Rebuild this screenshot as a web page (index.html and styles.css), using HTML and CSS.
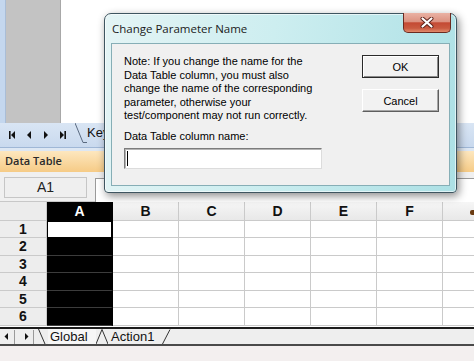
FILE: index.html
```html
<!DOCTYPE html>
<html lang="en">
<head>
    <meta charset="UTF-8">
    <title>Data Table - Change Parameter Name</title>
    <link rel="stylesheet" href="styles.css">
</head>
<body>
    <div class="app">
        <div class="top-pane">
            <div class="frame-edge"></div>
            <div class="tree-pane"></div>
            <div class="doc-pane"></div>
        </div>

        <div class="view-tabs">
            <svg class="view-nav" width="70" height="12" viewBox="0 0 70 12">
                <rect x="9" y="2" width="1.6" height="8" fill="#111"/>
                <path d="M15 2 L11 6 L15 10 Z" fill="#111"/>
                <path d="M31 2 L27 6 L31 10 Z" fill="#111"/>
                <path d="M44 2 L48 6 L44 10 Z" fill="#111"/>
                <path d="M60 2 L64 6 L60 10 Z" fill="#111"/>
                <rect x="64.4" y="2" width="1.6" height="8" fill="#111"/>
            </svg>
            <div class="view-tab">
                <svg class="view-tab-edge" width="12" height="21" viewBox="0 0 12 21">
                    <path d="M0 0 L8 19.5 H12" fill="none" stroke="#5a6a80" stroke-width="1"/>
                </svg>
                <span>Key</span>
            </div>
        </div>

        <div class="dt-title">Data Table</div>

        <div class="dt-toolbar">
            <div class="name-box">A1</div>
            <div class="formula-box"></div>
        </div>

        <div class="grid">
            <div class="corner"></div>
            <div class="col-head sel">A</div>
            <div class="col-head">B</div>
            <div class="col-head">C</div>
            <div class="col-head">D</div>
            <div class="col-head">E</div>
            <div class="col-head">F</div>
            <div class="col-head col-last"><span class="col-dot"></span></div>

            <div class="row-head">1</div>
            <div class="cell active"></div>
            <div class="cell"></div><div class="cell"></div><div class="cell"></div>
            <div class="cell"></div><div class="cell"></div><div class="cell"></div>

            <div class="row-head">2</div>
            <div class="cell sel"></div>
            <div class="cell"></div><div class="cell"></div><div class="cell"></div>
            <div class="cell"></div><div class="cell"></div><div class="cell"></div>

            <div class="row-head">3</div>
            <div class="cell sel"></div>
            <div class="cell"></div><div class="cell"></div><div class="cell"></div>
            <div class="cell"></div><div class="cell"></div><div class="cell"></div>

            <div class="row-head">4</div>
            <div class="cell sel"></div>
            <div class="cell"></div><div class="cell"></div><div class="cell"></div>
            <div class="cell"></div><div class="cell"></div><div class="cell"></div>

            <div class="row-head">5</div>
            <div class="cell sel"></div>
            <div class="cell"></div><div class="cell"></div><div class="cell"></div>
            <div class="cell"></div><div class="cell"></div><div class="cell"></div>

            <div class="row-head">6</div>
            <div class="cell sel"></div>
            <div class="cell"></div><div class="cell"></div><div class="cell"></div>
            <div class="cell"></div><div class="cell"></div><div class="cell"></div>
        </div>

        <div class="sheet-tabs">
            <svg class="sheet-nav" width="38" height="15" viewBox="0 0 38 15">
                <path d="M8 4 L4.5 7.5 L8 11 Z" fill="#111"/>
                <rect x="14" y="1" width="1" height="14" fill="#9a9a9a"/>
                <path d="M25 4 L28.5 7.5 L25 11 Z" fill="#111"/>
                <rect x="33" y="1" width="1" height="14" fill="#9a9a9a"/>
            </svg>
            <svg class="tab-edge" width="10" height="15" viewBox="0 0 10 15">
                <path d="M0.5 0 L7 15" fill="none" stroke="#333" stroke-width="1"/>
            </svg>
            <span class="sheet-tab active">Global</span>
            <svg class="tab-edge" width="12" height="15" viewBox="0 0 12 15">
                <path d="M0 15 L6 0.5 L12 15" fill="none" stroke="#333" stroke-width="1"/>
            </svg>
            <span class="sheet-tab">Action1</span>
            <svg class="tab-edge" width="9" height="15" viewBox="0 0 9 15">
                <path d="M0.5 15 L8 0.5" fill="none" stroke="#333" stroke-width="1"/>
            </svg>
        </div>

        <div class="status-bar"></div>
    </div>

    <div class="dialog">
        <div class="dlg-titlebar">
            <span class="dlg-title">Change Parameter Name</span>
            <div class="dlg-close">
                <svg width="14" height="11" viewBox="0 0 14 11">
                    <path d="M2.5 1.5 L11.5 9.5 M11.5 1.5 L2.5 9.5" stroke="#5a2018" stroke-width="4" stroke-linecap="round"/>
                    <path d="M2.5 1.5 L11.5 9.5 M11.5 1.5 L2.5 9.5" stroke="#fff" stroke-width="2.2" stroke-linecap="round"/>
                </svg>
            </div>
        </div>
        <div class="dlg-client">
            <div class="dlg-main">
                <p class="dlg-note">Note: If you change the name for the<br>Data Table column, you must also<br>change the name of the corresponding<br>parameter, otherwise your<br>test/component may not run correctly.</p>
                <label class="dlg-label">Data Table column name:</label>
                <div class="dlg-input"><span class="caret"></span></div>
            </div>
            <div class="dlg-buttons">
                <button class="btn btn-default">OK</button>
                <button class="btn">Cancel</button>
            </div>
        </div>
    </div>
</body>
</html>
```

FILE: styles.css
```css
* {
    margin: 0;
    padding: 0;
    box-sizing: border-box;
}

body {
    width: 474px;
    height: 361px;
    overflow: hidden;
    position: relative;
    background: #fff;
    color: #000;
    font-family: "Liberation Sans", Arial, sans-serif;
}

.app {
    display: flex;
    flex-direction: column;
    height: 361px;
}

/* upper window area */
.top-pane {
    height: 123px;
    display: flex;
}

.frame-edge {
    width: 6px;
    background: #c4d7ee;
    border-right: 1px solid #a9bdd6;
}

.tree-pane {
    width: 55px;
    background: #c3c3c3;
    border-right: 1px solid #a8a8a8;
}

.doc-pane {
    flex: 1;
    background: #fff;
}

.view-tabs {
    height: 25px;
    display: flex;
    align-items: flex-start;
    background: linear-gradient(#d9e5f4, #c9d9ee);
    border-bottom: 1px solid #9fb7d6;
}

.view-nav {
    margin-top: 6px;
}

.view-tab {
    display: flex;
    align-items: flex-start;
    height: 21px;
    margin-left: 5px;
    font-size: 13px;
    color: #111;
}

.view-tab span {
    line-height: 20px;
}

.dt-title {
    height: 24px;
    padding-left: 5px;
    border-top: 3px solid #dde7f3;
    background: linear-gradient(#fde7bf, #f6cb86);
    font-family: "Open Sans", sans-serif;
    font-weight: 600;
    font-size: 11px;
    line-height: 20px;
    color: #2a2a2a;
}

.dt-toolbar {
    height: 30px;
    display: flex;
    align-items: flex-start;
    gap: 8px;
    padding: 5px 0 0 4px;
    background: #f0f0f0;
    border-bottom: 1px solid #c8c8c8;
}

.name-box {
    width: 83px;
    height: 21px;
    border: 1px solid #c6c6c6;
    background: #efefef;
    text-align: center;
    font-size: 14px;
    line-height: 19px;
    color: #222;
}

.formula-box {
    flex: 1;
    height: 25px;
    margin-top: 1px;
    border-top: 1px solid #9a9a9a;
    border-left: 1px solid #9a9a9a;
    background: #fff;
}

/* data grid */
.grid {
    display: grid;
    grid-template-columns: 47px repeat(7, 66px);
    grid-template-rows: 19px 17px 18px 17px 18px 17px 18px;
    overflow: hidden;
    background: #fff;
    font-weight: bold;
    font-size: 14px;
    color: #111;
}

.corner,
.col-head,
.row-head,
.cell {
    border-right: 1px solid #cacaca;
    border-bottom: 1px solid #cacaca;
}

.corner {
    background: #ececec;
}

.col-head {
    background: linear-gradient(#f6f6f6, #e8e8e8);
    text-align: center;
    line-height: 18px;
}

.col-head.sel {
    background: #000;
    color: #fff;
    border-color: #000;
}

.col-last {
    text-align: left;
    padding-left: 27px;
}

.col-dot {
    display: inline-block;
    width: 4px;
    height: 5px;
    border-radius: 2px 0 0 2px;
    background: #6a3a10;
    vertical-align: middle;
}

.row-head {
    background: #ededed;
    text-align: center;
    line-height: 17px;
}

.cell {
    background: #fff;
}

.cell.sel {
    background: #000;
    border-right: 2px solid #000;
    border-bottom-color: #3c3c3c;
}

.cell.active {
    background: #fff;
    border: 1px solid #000;
    border-right: 2px solid #000;
}

/* sheet tabs */
.sheet-tabs {
    height: 19px;
    margin-top: 1px;
    display: flex;
    align-items: flex-start;
    background: #eeeeee;
    border-top: 2px solid #1c1c1c;
    border-bottom: 2px solid #4a4a4a;
}

.sheet-tab {
    height: 15px;
    font-size: 13px;
    line-height: 15px;
    color: #111;
}

.sheet-tab.active {
    width: 48px;
    padding-left: 2px;
    background: #f6f6f6;
}

.sheet-tab:not(.active) {
    width: 54px;
    padding-left: 3px;
}

.status-bar {
    flex: 1;
    background: #f3efef;
}

/* dialog */
.dialog {
    position: absolute;
    left: 104px;
    top: 13px;
    width: 353px;
    height: 180px;
    display: flex;
    flex-direction: column;
    padding: 0 6px 6px;
    border: 1px solid #3e5560;
    border-radius: 7px 7px 4px 4px;
    background: linear-gradient(100deg, #e4f4f5 0%, #cdeef0 45%, #ace0e5 100%);
    box-shadow: 2px 3px 9px rgba(0, 0, 0, 0.45), inset 0 0 0 1px rgba(255, 255, 255, 0.6);
}

.dlg-titlebar {
    height: 29px;
    display: flex;
    justify-content: space-between;
    align-items: flex-start;
}

.dlg-title {
    margin-top: 7px;
    margin-left: 1px;
    font-family: "Open Sans", sans-serif;
    font-size: 11.5px;
    color: #1b1b1b;
}

.dlg-close {
    width: 48px;
    height: 20px;
    margin-top: -1px;
    margin-right: -1px;
    display: flex;
    align-items: center;
    justify-content: center;
    border: 1px solid #6b2a20;
    border-top: none;
    border-radius: 0 0 5px 5px;
    background: linear-gradient(#eab2a4 0%, #dc9281 45%, #c44a34 52%, #c95a40 80%, #e28a6c 100%);
}

.dlg-client {
    flex: 1;
    display: flex;
    justify-content: space-between;
    padding: 11px 10px 0 12px;
    background: #f0f0f0;
    border: 1px solid #86aeb6;
}

.dlg-main {
    display: flex;
    flex-direction: column;
    width: 205px;
    font-size: 11px;
}

.dlg-note {
    line-height: 13.5px;
}

.dlg-label {
    margin-top: 7px;
    line-height: 13.5px;
}

.dlg-input {
    width: 198px;
    height: 21px;
    margin-top: 5px;
    padding: 2px 0 0 2px;
    background: #fff;
    border: 1px solid;
    border-color: #7c7c7c #dcdcdc #dcdcdc #7c7c7c;
    box-shadow: inset 1px 1px 0 #b4b4b4;
}

.caret {
    display: block;
    width: 1px;
    height: 15px;
    background: #000;
}

.dlg-buttons {
    display: flex;
    flex-direction: column;
    gap: 11px;
}

.btn {
    width: 77px;
    height: 23px;
    font-family: "Liberation Sans", Arial, sans-serif;
    font-size: 11px;
    color: #000;
    background: #f2f2f2;
    border: 1px solid;
    border-color: #fff #5e5e5e #5e5e5e #fff;
    box-shadow: inset -1px -1px 0 #a6a6a6;
}

.btn-default {
    border: 1px solid #2a2a2a;
    box-shadow: inset 1px 1px 0 #fff, inset -1px -1px 0 #8a8a8a;
}
```
